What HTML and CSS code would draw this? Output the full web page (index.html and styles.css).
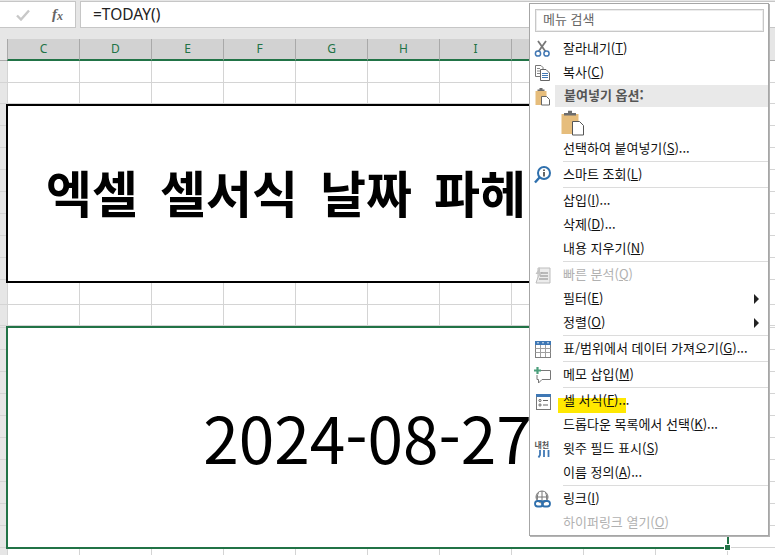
FILE: index.html
```html
<!DOCTYPE html>
<html lang="ko">
<head>
<meta charset="utf-8">
<title>엑셀 셀서식 날짜 파헤</title>
<link rel="stylesheet" href="styles.css">
</head>
<body>
<div class="app">
  <div class="formula-bar">
    <div class="fx-box">
      <svg class="check" viewBox="0 0 14 12" width="14" height="12"><path d="M1 6.5 5 10.5 13 1.5" fill="none" stroke="#c8c8c8" stroke-width="2.4"/></svg>
      <span class="fx">f<sub>x</sub></span>
    </div>
    <div class="formula">=TODAY()</div>
  </div>
  <div class="col-heads">
    <div class="corner"></div>
    <div class="col">C</div><div class="col">D</div><div class="col">E</div><div class="col">F</div><div class="col">G</div>
    <div class="col">H</div><div class="col">I</div><div class="col"></div><div class="col"></div><div class="col"></div>
    <div class="col-rest"></div>
  </div>
  <div class="sheet">
    <div class="row"><div class="row-head"></div><div class="cells"></div></div>
    <div class="row short"><div class="row-head"></div><div class="cells"></div></div>
    <div class="merged title-row">
      <div class="side-head"></div>
      <div class="box box-title">엑셀 셀서식 날짜 파헤</div>
      <div class="side-rest"></div>
    </div>
    <div class="row"><div class="row-head"></div><div class="cells"></div></div>
    <div class="row short"><div class="row-head"></div><div class="cells"></div></div>
    <div class="merged date-row">
      <div class="side-head"></div>
      <div class="box box-date">2024-08-27<span class="handle"></span></div>
      <div class="side-rest"></div>
    </div>
    <div class="row"><div class="row-head"></div><div class="cells"></div></div>
  </div>

  <div class="menu">
    <div class="search">메뉴 검색</div>
    <div class="item"><svg class="ico" viewBox="0 0 20 20"><path d="M6 2 13.5 12.5M14 2 6.5 12.5" stroke="#777" stroke-width="1.8" fill="none"/><circle cx="6" cy="14.5" r="2.6" fill="none" stroke="#4278b4" stroke-width="1.5"/><circle cx="14.5" cy="14.5" r="2.6" fill="none" stroke="#4278b4" stroke-width="1.5"/></svg><span>잘라내기(<u>T</u>)</span></div>
    <div class="item"><svg class="ico" viewBox="0 0 20 20"><path d="M3.5 2.5H9L11 4.5V13.5H3.5Z" fill="#fff" stroke="#777"/><path d="M5 5.5H8M5 8H8M5 10.5H8" stroke="#888"/><path d="M8.5 6.5H14L17.5 10V17.5H8.5Z" fill="#fff" stroke="#666"/><path d="M10 10.5H16M10 12.5H16M10 14.5H16" stroke="#4278b4"/></svg><span>복사(<u>C</u>)</span></div>
    <div class="item item-head"><svg class="ico" viewBox="0 0 20 20"><rect x="3.5" y="5" width="11" height="14" fill="#e6bd7c"/><path d="M5.5 5V3.5H7.5V2H10.5V3.5H12.5V5Z" fill="#6d6d6d"/><path d="M9.5 10.5H14.5L17.5 13.5V19H9.5Z" fill="#fff" stroke="#666"/></svg><span class="head-label">붙여넣기 옵션:</span></div>
    <div class="paste-row"><svg class="paste-big" viewBox="0 0 24 26" width="24" height="26"><rect x="0.5" y="4" width="17" height="20" fill="#e6bd7c"/><path d="M3 5.5V3H7V0.8H11V3H15V5.5Z" fill="#6d6d6d"/><path d="M11.5 11.5H18.5L22.5 15.5V25H11.5Z" fill="#fff" stroke="#555"/></svg></div>
    <div class="item plain">선택하여 붙여넣기(<u>S</u>)...</div>
    <div class="sep"></div>
    <div class="item"><svg class="ico" viewBox="0 0 20 20"><circle cx="12" cy="8" r="6" fill="#fff" stroke="#2f70ad" stroke-width="2"/><path d="M12 7V11.5M12 4.5V6" stroke="#555" stroke-width="1.8"/><path d="M7.5 12.5 3 17.5" stroke="#2f70ad" stroke-width="2.4"/></svg><span>스마트 조회(<u>L</u>)</span></div>
    <div class="sep"></div>
    <div class="item plain">삽입(<u>I</u>)...</div>
    <div class="item plain">삭제(<u>D</u>)...</div>
    <div class="item plain">내용 지우기(<u>N</u>)</div>
    <div class="sep"></div>
    <div class="item disabled"><svg class="ico" viewBox="0 0 20 20"><path d="M6 3H18V18H4L6 12Z" fill="#ececec" stroke="#bdbdbd"/><path d="M8 2 3.5 9H7L5 14 11 7H8Z" fill="#c4c4c4"/><path d="M9 8H16M8 11H16M7 14H16" stroke="#a8a8a8" stroke-width="1.4"/></svg><span>빠른 분석(<u>Q</u>)</span></div>
    <div class="item plain">필터(<u>E</u>)<i class="arrow"></i></div>
    <div class="item plain">정렬(<u>O</u>)<i class="arrow"></i></div>
    <div class="sep"></div>
    <div class="item"><svg class="ico" viewBox="0 0 20 20"><rect x="3.5" y="2.5" width="15" height="16" fill="#fff" stroke="#808080"/><rect x="3" y="2" width="16" height="4" fill="#3f78b5"/><path d="M5 3.8H7M10 3.8H12M15 3.8H17" stroke="#dfe9f3"/><path d="M3.500 9.500H18.500M3.500 13.500H18.500M8.500 6V18M13.500 6V18" stroke="#a0a0a0"/></svg><span>표/범위에서 데이터 가져오기(<u>G</u>)...</span></div>
    <div class="sep"></div>
    <div class="item"><svg class="ico" viewBox="0 0 20 20"><path d="M8 5.500H18.500V14.500H10L6.500 18V14.500H5V10" fill="#fff" stroke="#777"/><path d="M5.500 2V9M2 5.500H9" stroke="#4c9f7c" stroke-width="2.200"/></svg><span>메모 삽입(<u>M</u>)</span></div>
    <div class="sep"></div>
    <div class="item marked"><svg class="ico" viewBox="0 0 20 20"><rect x="4.500" y="3.500" width="14" height="15" fill="#fff" stroke="#777"/><rect x="4" y="3" width="15" height="3" fill="#3f78b5"/><circle cx="8" cy="9.500" r="1.100" fill="none" stroke="#666"/><circle cx="8" cy="14" r="1.100" fill="none" stroke="#666"/><path d="M11 9.500H16M11 14H16" stroke="#666"/></svg><span>셀 서식(<u>F</u>)...</span></div>
    <div class="item plain">드롭다운 목록에서 선택(<u>K</u>)...</div>
    <div class="item"><svg class="ico" viewBox="0 0 20 20"><text class="ico-text" x="2.500" y="8.500">내천</text><path d="M8 11V16L6.500 18.500M12 11V18M16.500 11V18" fill="none" stroke="#3f78b5" stroke-width="1.800"/></svg><span>윗주 필드 표시(<u>S</u>)</span></div>
    <div class="item plain">이름 정의(<u>A</u>)...</div>
    <div class="sep"></div>
    <div class="item"><svg class="ico" viewBox="0 0 20 20"><circle cx="10" cy="8" r="6" fill="#fff" stroke="#777"/><path d="M4 8H16M10 2V13M6.500 3.500C5 7 5 9 6 13M13.500 3.500C15 7 15 9 14 13" fill="none" stroke="#777"/><rect x="3" y="12" width="8" height="5.500" rx="2.700" fill="none" stroke="#2f70ad" stroke-width="1.800"/><rect x="10" y="12" width="8" height="5.500" rx="2.700" fill="none" stroke="#2f70ad" stroke-width="1.800"/></svg><span>링크(<u>I</u>)</span></div>
    <div class="item plain disabled">하이퍼링크 열기(<u>O</u>)</div>
  </div>
</div>
</body>
</html>
```
FILE: styles.css
```css
* { box-sizing: border-box; }
html, body { margin: 0; padding: 0; }
body { width: 775px; height: 555px; overflow: hidden; background: #fff; font-family: "Noto Sans CJK KR", "Noto Sans", sans-serif; color: #000; }
.app { position: relative; width: 775px; height: 555px; overflow: hidden; background: #e6e6e6; }

.formula-bar { display: flex; gap: 4px; height: 39px; padding-top: 1px; align-items: flex-start; }
.fx-box { display: flex; align-items: center; width: 76px; height: 27px; background: #fff; border: 1px solid #c6c6c6; border-left: 0; padding-left: 16px; }
.check { flex: none; }
.fx { margin-left: 22px; font: italic 700 15px "Liberation Serif", serif; color: #666; }
.fx sub { font-size: 12px; vertical-align: -1px; line-height: 0; }
.formula { flex: 1; height: 27px; background: #fff; border: 1px solid #c6c6c6; border-right: 0; padding-left: 12px; font: 15.5px/25px "Noto Sans", sans-serif; color: #222; }

.col-heads { display: flex; height: 22px; }
.corner { width: 7px; border-bottom: 1px solid #ababab; }
.col { width: 72px; flex: none; background: #d2d2d2; border-left: 1px solid #a9a9a9; border-bottom: 2px solid #217346; text-align: center; font: 12px/19px "Noto Sans", sans-serif; color: #217346; }
.col-rest { flex: 1; border-left: 1px solid #a9a9a9; border-bottom: 1px solid #ababab; }

.sheet { background: #fff; }
.row { display: flex; height: 22px; }
.row.short { height: 21px; }
.row-head { width: 7px; flex: none; background: #e6e6e6; border-bottom: 1px solid #d4d4d4; }
.cells { flex: 1; border-bottom: 1px solid #d4d4d4; background: linear-gradient(90deg, transparent 71px, #d4d4d4 71px) 1px 0 / 72px 100%; }

.merged { display: flex; position: relative; }
.title-row { height: 179px; }
.date-row { height: 223px; }
.side-head { width: 6px; flex: none; background: linear-gradient(#e6e6e6 21px, #d4d4d4 21px) 0 0 / 100% 22px; }
.side-rest { flex: 1; background: linear-gradient(#fff 21px, #d4d4d4 21px) 0 0 / 100% 22px; }
.date-row .side-head, .date-row .side-rest { background-position: 0 2px; }
.box { position: relative; width: 723px; flex: none; background: #fff; border: 2px solid #000; }
.box-title { padding-left: 38px; font-size: 50px; font-weight: 700; line-height: 170px; word-spacing: 8px; white-space: nowrap; overflow: hidden; }
.box-date { border-color: #217346; text-align: center; font-size: 64px; line-height: 217px; }
.handle { position: absolute; right: -4px; bottom: -4px; width: 7px; height: 7px; background: #217346; border: 1px solid #fff; }

.menu { position: absolute; left: 529px; top: 3px; width: 240px; height: 533px; background: #fff; border: 1px solid #a6a6a6; box-shadow: 1px 1px 0 #b4b4b4; font-size: 13px; }
.search { width: 229px; height: 23px; margin: 5px 0 5px 5px; border: 1px solid #c8c8c8; box-shadow: inset 0 0 0 1px #ececec; padding-left: 7px; line-height: 18px; color: #666; }
.item { display: flex; align-items: center; height: 24px; line-height: 22px; padding-bottom: 2px; white-space: nowrap; color: #111; }
.item.plain { padding-left: 33px; }
.ico { width: 20px; height: 20px; flex: none; margin: 2px 11px 0 2px; }
.ico-text { font-size: 8px; font-weight: 700; fill: #555; }
u { text-underline-offset: 1px; }
.item-head { height: 22px; padding-bottom: 0; }
.item-head .ico { margin: 0 3px 0 2px; }
.head-label { flex: 1; height: 22px; background: #e9e9e9; padding-left: 9px; line-height: 20px; font-weight: 700; color: #555; }
.paste-row { height: 30px; padding: 3px 0 0 31px; }
.paste-big { display: block; }
.sep { height: 2px; margin-left: 33px; border-top: 1px solid #dcdcdc; }
.item.disabled { color: #b1b1b1; }
.arrow { margin: 2px 9px 0 auto; width: 0; height: 0; border-left: 5px solid #222; border-top: 5px solid transparent; border-bottom: 5px solid transparent; }
.marked { background: linear-gradient(#ffe800, #ffe800) 28px 9px / 68px 15px no-repeat; }
```
